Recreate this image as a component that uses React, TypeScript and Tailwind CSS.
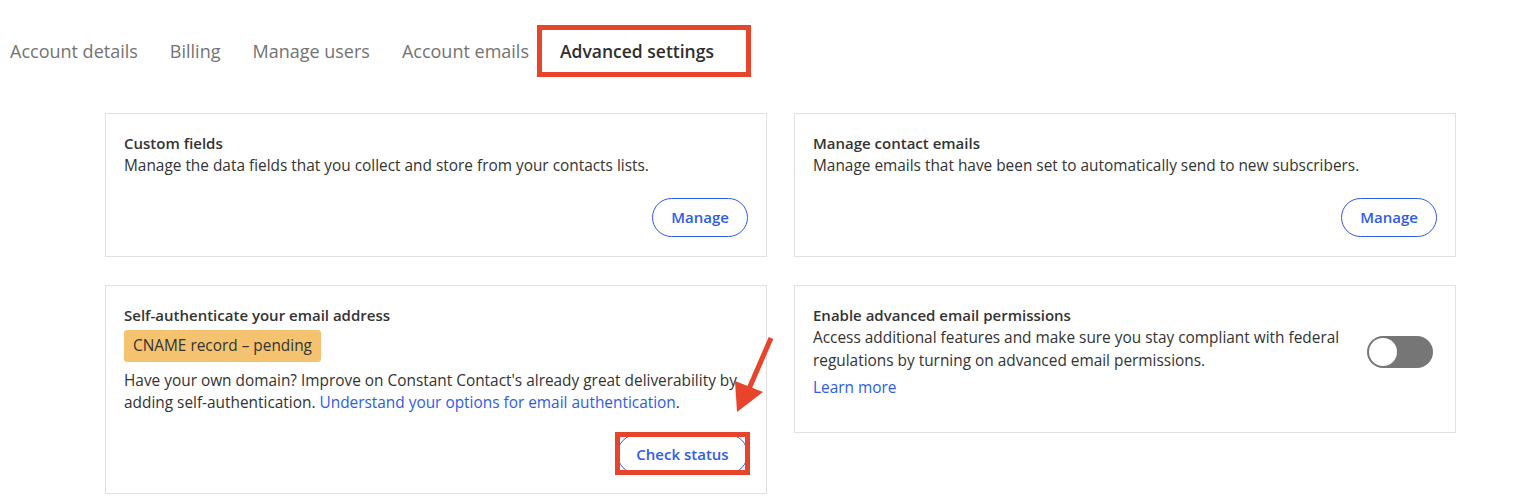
import React from "react"

const font = { fontFamily: "'Open Sans', Lato, sans-serif" }

function Tabs() {
  const tabs = ["Account details", "Billing", "Manage users", "Account emails"]
  return (
    <div className="mt-[25px] flex h-[52px] items-center pl-[10px]">
      <div className="flex gap-8">
        {tabs.map((t) => (
          <span key={t} className="text-[18px] text-[#737373]">
            {t}
          </span>
        ))}
      </div>
      <span className="ml-[8px] flex h-[52px] w-[214px] items-center border-[5px] border-[#e8432b] pl-[18px] text-[17.5px] font-semibold text-[#2f2f2f]">
        Advanced settings
      </span>
    </div>
  )
}

function Card({ children, className = "" }: { children: React.ReactNode; className?: string }) {
  return (
    <div className={`border border-[#e1e1e1] bg-white px-[18px] pt-[18px] pb-[19px] ${className}`}>
      {children}
    </div>
  )
}

function PillButton({ label }: { label: string }) {
  return (
    <button className="h-[39px] w-[96px] rounded-full border border-[#2f5bea] text-[15px] font-semibold text-[#2f5bea]">
      {label}
    </button>
  )
}

export default function App() {
  return (
    <div className="relative h-[504px] w-[1536px] overflow-hidden bg-white text-[#333]" style={font}>
      <Tabs />
      <div className="ml-[105px] mt-[36px] grid w-[1351px] grid-cols-2 items-start gap-x-[27px] gap-y-[28px]">
        <Card className="flex h-[144px] flex-col">
          <div className="text-[15px] font-semibold leading-[22px]">Custom fields</div>
          <div className="text-[15.4px] leading-[24px]">
            Manage the data fields that you collect and store from your contacts lists.
          </div>
          <div className="mt-auto flex justify-end">
            <PillButton label="Manage" />
          </div>
        </Card>
        <Card className="flex h-[144px] flex-col">
          <div className="text-[15px] font-semibold leading-[22px]">Manage contact emails</div>
          <div className="text-[15.4px] leading-[24px]">
            Manage emails that have been set to automatically send to new subscribers.
          </div>
          <div className="mt-auto flex justify-end">
            <PillButton label="Manage" />
          </div>
        </Card>
        <Card>
          <div className="text-[15px] font-semibold leading-[22px]">Self-authenticate your email address</div>
          <div className="mt-[4px] inline-flex h-[32px] items-center rounded-[3px] bg-[#f5c36f] px-[9px] text-[15.4px]">
            CNAME record – pending
          </div>
          <div className="mt-[8px] text-[15.4px] leading-[22px]">
            Have your own domain? Improve on Constant Contact's already great deliverability by adding
            self-authentication.{" "}
            <span className="text-[#2f5bea]">Understand your options for email authentication</span>.
          </div>
          <div className="mt-[20px] flex justify-end">
            <div className="relative">
              <button className="h-[40px] w-[131px] rounded-full border border-[#2f5bea] text-[15px] font-semibold text-[#2f5bea]">
                Check status
              </button>
              <div className="absolute -left-[2px] -top-[2px] h-[43px] w-[135px] border-[5px] border-[#e8432b]" />
            </div>
          </div>
        </Card>
        <Card className="pr-[22px]">
          <div className="flex items-center gap-6">
            <div className="flex-1">
              <div className="text-[15px] font-semibold leading-[22px]">Enable advanced email permissions</div>
              <div className="text-[15.4px] leading-[23px]">
                Access additional features and make sure you stay compliant with federal regulations by
                turning on advanced email permissions.
              </div>
              <div className="mt-[5px] text-[15.4px] leading-[22px] text-[#2f5bea]">Learn more</div>
            </div>
            <div className="flex h-[32px] w-[66px] shrink-0 items-center rounded-full bg-[#767676] px-[2px]">
              <div className="h-[28px] w-[28px] rounded-full bg-white" />
            </div>
          </div>
          <div className="h-[14px]" />
        </Card>
      </div>
      <svg className="pointer-events-none absolute left-0 top-0" width="1536" height="504">
        <line x1="771" y1="338" x2="745" y2="398" stroke="#e8432b" strokeWidth="5" />
        <polygon points="737,412 735,381 763,392" fill="#e8432b" />
      </svg>
    </div>
  )
}
